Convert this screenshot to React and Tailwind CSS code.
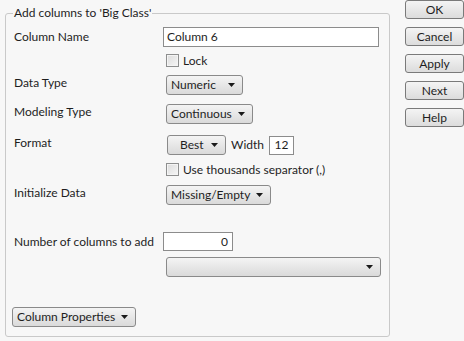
import React from 'react';

const Arrow = () => (
  <svg width="7" height="4" viewBox="0 0 7 4" className="shrink-0">
    <path d="M0 0h7L3.5 4z" fill="#1a1a1a" />
  </svg>
);

const Dropdown = ({ label, className = '' }) => (
  <button
    className={`h-5 min-w-max flex items-center justify-between gap-[6px] whitespace-nowrap rounded-[3px] border border-[#8a8a8a] bg-gradient-to-b from-[#f4f4f4] to-[#dadada] pl-[4px] pr-[7px] text-[#1e1e1e] ${className}`}
  >
    <span className="leading-none">{label}</span>
    <Arrow />
  </button>
);

const Check = ({ label }) => (
  <label className="flex items-center gap-[4px] whitespace-nowrap">
    <span className="w-[13px] h-[13px] border border-[#8e8f8f] bg-gradient-to-br from-[#dcdcdc] to-[#f6f6f6] shadow-[inset_0_0_0_1px_#f4f4f4]" />
    <span className="leading-none">{label}</span>
  </label>
);

const Row = ({ label, className = '', children }) => (
  <div className={`flex ${className}`}>
    <div className="w-[149px] shrink-0 leading-[16px] whitespace-nowrap">{label}</div>
    <div className="flex-1">{children}</div>
  </div>
);

const SideButton = ({ children }) => (
  <button className="w-[59px] h-[19px] rounded-[3px] border border-[#7a7a7a] bg-gradient-to-b from-[#f4f4f4] to-[#dcdcdc] text-[#1e1e1e] leading-none">
    {children}
  </button>
);

export default function App() {
  return (
    <div
      className="w-[464px] h-[341px] bg-[#f7f7f7] flex text-[12px] text-[#1e1e1e] overflow-hidden"
      style={{ fontFamily: '"Segoe UI", Lato, sans-serif' }}
    >
      <fieldset className="ml-[5px] mt-[5px] w-[383px] h-[332px] border border-[#c9c9c9] rounded-[3px] pl-[8px] pr-[8px]">
        <legend className="px-[1px] -ml-[1px] leading-[16px]">Add columns to 'Big Class'</legend>

        <Row label="Column Name" className="mt-[6px] h-5 items-center">
          <div className="w-[216px] h-5 bg-white border border-[#8c8c8c] pl-[3px] flex items-center leading-none">Column 6</div>
        </Row>

        <Row label="" className="mt-[7px] h-[13px]">
          <div className="ml-[3px]"><Check label="Lock" /></div>
        </Row>

        <Row label="Data Type" className="mt-[8px]">
          <Dropdown label="Numeric" className="ml-[3px] w-[77px]" />
        </Row>

        <Row label="Modeling Type" className="mt-[9px]">
          <Dropdown label="Continuous" className="ml-[3px] w-[85px]" />
        </Row>

        <Row label="Format" className="mt-[11px]">
          <div className="flex items-center">
            <Dropdown label="Best" className="ml-[4px] w-[59px] pl-[12px]" />
            <span className="ml-[5px] leading-none">Width</span>
            <div className="ml-[5px] w-[25px] h-[19px] bg-white border border-[#8c8c8c] flex items-center justify-center leading-none">12</div>
          </div>
        </Row>

        <Row label="" className="mt-[8px] h-[13px]">
          <div className="ml-[3px]"><Check label="Use thousands separator (,)" /></div>
        </Row>

        <Row label="Initialize Data" className="mt-[9px]">
          <Dropdown label="Missing/Empty" className="ml-[3px] w-[103px]" />
        </Row>

        <Row label="Number of columns to add" className="mt-[27px] h-[19px] items-center">
          <div className="w-[70px] h-[19px] bg-white border border-[#8c8c8c] flex items-center justify-end pr-[4px] leading-none">0</div>
        </Row>

        <Row label="" className="mt-[6px]">
          <Dropdown label="" className="ml-[3px] w-[215px]" />
        </Row>

        <div className="mt-[30px] -ml-[2px] flex">
          <Dropdown label="Column Properties" className="w-[118px] pl-[4px] pr-[5px] gap-[3px]" />
        </div>
      </fieldset>

      <div className="ml-[15px] flex flex-col gap-[8px]">
        <SideButton>OK</SideButton>
        <SideButton>Cancel</SideButton>
        <SideButton>Apply</SideButton>
        <SideButton>Next</SideButton>
        <SideButton>Help</SideButton>
      </div>
    </div>
  );
}
